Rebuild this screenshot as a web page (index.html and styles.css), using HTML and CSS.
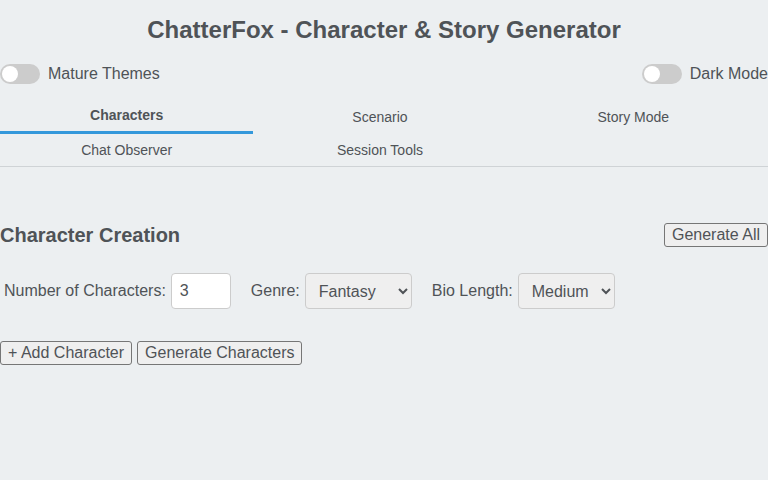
FILE: index.html
```html
<!DOCTYPE html>
<html>
<head>
<meta charset="utf-8">
<link rel="stylesheet" href="styles.css">
</head>
<body>
<div class="app">
  <h1 class="title">ChatterFox - Character &amp; Story Generator</h1>
  <div class="toggles">
    <label class="toggle"><span class="switch"><span class="knob"></span></span><span>Mature Themes</span></label>
    <label class="toggle"><span class="switch"><span class="knob"></span></span><span>Dark Mode</span></label>
  </div>
  <nav class="tabs">
    <div class="tab active">Characters</div>
    <div class="tab">Scenario</div>
    <div class="tab">Story Mode</div>
    <div class="tab row2">Chat Observer</div>
    <div class="tab row2">Session Tools</div>
  </nav>
  <section class="panel">
    <div class="panel-head">
      <h2 class="panel-title">Character Creation</h2>
      <button class="btn">Generate All</button>
    </div>
    <div class="form-row">
      <div class="group">
        <label>Number of Characters:</label>
        <input class="num" type="text" value="3">
      </div>
      <div class="group">
        <label>Genre:</label>
        <select class="sel genre"><option>Fantasy</option><option>Sci-Fi</option></select>
      </div>
      <div class="group">
        <label>Bio Length:</label>
        <select class="sel bio"><option>Medium</option><option>Short</option></select>
      </div>
    </div>
    <div class="actions">
      <button class="btn">+ Add Character</button>
      <button class="btn">Generate Characters</button>
    </div>
  </section>
</div>
</body>
</html>
```
FILE: styles.css
```css
html, body {
  margin: 0;
  padding: 0;
  background: #eceff1;
}
body {
  font-family: "Liberation Sans", Arial, sans-serif;
  color: #4f5357;
  width: 768px;
  height: 480px;
  overflow: hidden;
}
.title {
  margin: 16px 0 0;
  font-size: 24px;
  font-weight: bold;
  text-align: center;
  line-height: 28px;
}
.toggles {
  display: flex;
  justify-content: space-between;
  margin-top: 20px;
  height: 20px;
}
.toggle {
  display: flex;
  align-items: center;
  gap: 8px;
  font-size: 16px;
}
.switch {
  width: 40px;
  height: 20px;
  border-radius: 10px;
  background: #cccccc;
  position: relative;
  display: block;
}
.knob {
  position: absolute;
  left: 2px;
  top: 2px;
  width: 16px;
  height: 16px;
  border-radius: 50%;
  background: #ffffff;
}
.tabs {
  margin-top: 16px;
  display: grid;
  grid-template-columns: repeat(3, 253.33px);
  border-bottom: 1px solid #cfd3d6;
}
.tab {
  font-size: 14px;
  line-height: 16px;
  text-align: center;
  padding: 9px 0 9px;
}
.tab.active {
  font-weight: bold;
  padding: 7px 0 8px;
  border-bottom: 3px solid #3498db;
}
.tab.row2 {
  padding: 8px 0 8px;
}
.panel {
  margin-top: 56px;
}
.panel-head {
  display: flex;
  justify-content: space-between;
  align-items: center;
  height: 24px;
}
.panel-title {
  margin: 0;
  font-size: 20px;
  font-weight: bold;
}
.btn {
  font-family: "Liberation Sans", Arial, sans-serif;
  font-size: 16px;
  color: #4f5357;
  background: #efefef;
  border: 1px solid #767676;
  border-radius: 3px;
  padding: 1px 7px;
  height: 24px;
  margin: 0;
}
.form-row {
  display: flex;
  align-items: center;
  gap: 20px;
  margin-top: 26px;
  padding-left: 4px;
  height: 36px;
}
.group {
  display: flex;
  align-items: center;
  gap: 5px;
  font-size: 16px;
}
.num {
  width: 60px;
  height: 36px;
  box-sizing: border-box;
  padding: 8px;
  border: 1px solid #cccccc;
  border-radius: 4px;
  background: #ffffff;
  font-family: "Liberation Sans", Arial, sans-serif;
  font-size: 16px;
  color: #4f5357;
}
.sel {
  height: 36px;
  box-sizing: border-box;
  padding: 0 4px 0 9px;
  border: 1px solid #cccccc;
  border-radius: 4px;
  background-color: #efefef;
  font-family: "Liberation Sans", Arial, sans-serif;
  font-size: 16px;
  color: #4f5357;
}
.genre { width: 107px; }
.bio { width: 97px; }
.actions {
  display: flex;
  gap: 5px;
  margin-top: 32px;
}
```
